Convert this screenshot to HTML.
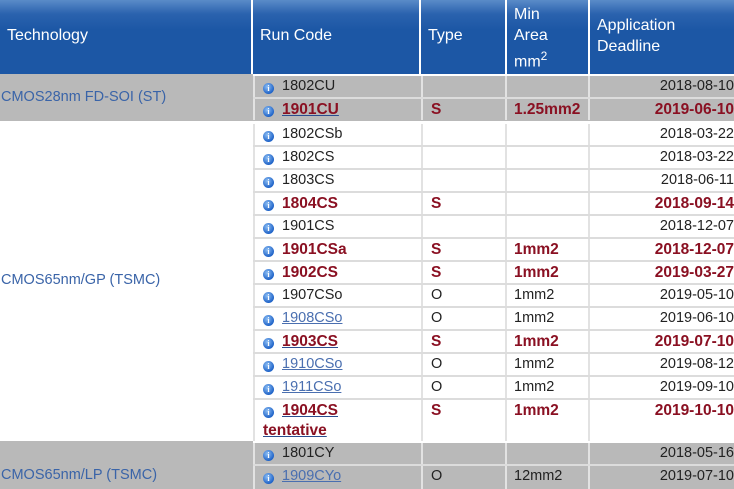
<!DOCTYPE html>
<html><head><meta charset="utf-8"><style>
*{margin:0;padding:0;box-sizing:border-box}
body{width:734px;height:489px;overflow:hidden;background:#fff;font-family:"Liberation Sans",Arial,sans-serif;position:relative}
.hdr{position:absolute;top:0;height:74px;background:linear-gradient(#5a8bc8 0px,#2a62ae 14px,#1c57a5 30px,#1c57a5 74px);color:#fff;font-size:16px}
.hdr span{position:absolute;left:7px}
.g{position:absolute;left:0;width:734px;background:#b9b9b9}
.tech{position:absolute;left:1px;color:#3a64a8;font-size:14.5px}
.row{position:absolute;left:253px;width:481px;height:23px;border-top:2px solid #dcdcdc;font-size:14.5px;color:#222}
.c{position:absolute;top:0;height:100%;border-left:2px solid #e2e2e2}
.rc{left:0;width:170px}
.ty{left:168px;width:86px}
.ar{left:252px;width:84px}
.dl{left:335px;width:146px}
.txt{position:absolute;top:2px;white-space:nowrap}
.rc .txt{left:27px}
.ty .txt{left:8px}
.ar .txt{left:7px}
.dl .txt{right:0}
.i{position:absolute;left:8px;top:7px;width:11px;height:11px;border-radius:50%;background:radial-gradient(circle at 40% 35%,#8fc0f5,#1f63c8 70%);color:#fff;font-size:8px;font-weight:bold;text-align:center;line-height:11px;font-family:"Liberation Serif",serif}
.b{color:#8a1022;font-weight:bold;font-size:15.5px}
.b.rcn{text-decoration:underline;text-decoration-color:#2a4d8f}
.lk{color:#4a6fb0;text-decoration:underline}
</style></head><body>
<div class="hdr" style="left:0;width:251px"><span style="top:27px">Technology</span></div>
<div class="hdr" style="left:253px;width:166px"><span style="top:27px">Run Code</span></div>
<div class="hdr" style="left:421px;width:84px"><span style="top:27px">Type</span></div>
<div class="hdr" style="left:507px;width:81px"><span style="top:4px;line-height:21px">Min<br>Area<br>mm<sup style="font-size:12px">2</sup></span></div>
<div class="hdr" style="left:590px;width:144px"><span style="top:15px;line-height:21px">Application<br>Deadline</span></div>

<div class="g" style="top:74px;height:47px"></div>
<div class="g" style="top:441px;height:48px"></div>
<div class="tech" style="top:89px">CMOS28nm FD-SOI (ST)</div>
<div class="tech" style="top:272px">CMOS65nm/GP (TSMC)</div>
<div class="tech" style="top:467px">CMOS65nm/LP (TSMC)</div>

<div class="row" style="top:74px;border-top-color:#fff"><div class="c rc"><div class="i">i</div><div class="txt">1802CU</div></div><div class="c ty"></div><div class="c ar"></div><div class="c dl"><div class="txt">2018-08-10</div></div></div>
<div class="row" style="top:97px"><div class="c rc"><div class="i">i</div><div class="txt b rcn">1901CU</div></div><div class="c ty"><div class="txt b">S</div></div><div class="c ar"><div class="txt b">1.25mm2</div></div><div class="c dl"><div class="txt b">2019-06-10</div></div></div>

<div class="row" style="top:122px;border-top-color:#fff"><div class="c rc"><div class="i">i</div><div class="txt">1802CSb</div></div><div class="c ty"></div><div class="c ar"></div><div class="c dl"><div class="txt">2018-03-22</div></div></div>
<div class="row" style="top:145px"><div class="c rc"><div class="i">i</div><div class="txt">1802CS</div></div><div class="c ty"></div><div class="c ar"></div><div class="c dl"><div class="txt">2018-03-22</div></div></div>
<div class="row" style="top:168px"><div class="c rc"><div class="i">i</div><div class="txt">1803CS</div></div><div class="c ty"></div><div class="c ar"></div><div class="c dl"><div class="txt">2018-06-11</div></div></div>
<div class="row" style="top:191px"><div class="c rc"><div class="i">i</div><div class="txt b">1804CS</div></div><div class="c ty"><div class="txt b">S</div></div><div class="c ar"></div><div class="c dl"><div class="txt b">2018-09-14</div></div></div>
<div class="row" style="top:214px"><div class="c rc"><div class="i">i</div><div class="txt">1901CS</div></div><div class="c ty"></div><div class="c ar"></div><div class="c dl"><div class="txt">2018-12-07</div></div></div>
<div class="row" style="top:237px"><div class="c rc"><div class="i">i</div><div class="txt b">1901CSa</div></div><div class="c ty"><div class="txt b">S</div></div><div class="c ar"><div class="txt b">1mm2</div></div><div class="c dl"><div class="txt b">2018-12-07</div></div></div>
<div class="row" style="top:260px"><div class="c rc"><div class="i">i</div><div class="txt b">1902CS</div></div><div class="c ty"><div class="txt b">S</div></div><div class="c ar"><div class="txt b">1mm2</div></div><div class="c dl"><div class="txt b">2019-03-27</div></div></div>
<div class="row" style="top:283px"><div class="c rc"><div class="i">i</div><div class="txt">1907CSo</div></div><div class="c ty"><div class="txt">O</div></div><div class="c ar"><div class="txt">1mm2</div></div><div class="c dl"><div class="txt">2019-05-10</div></div></div>
<div class="row" style="top:306px"><div class="c rc"><div class="i">i</div><div class="txt lk">1908CSo</div></div><div class="c ty"><div class="txt">O</div></div><div class="c ar"><div class="txt">1mm2</div></div><div class="c dl"><div class="txt">2019-06-10</div></div></div>
<div class="row" style="top:329px"><div class="c rc"><div class="i">i</div><div class="txt b rcn">1903CS</div></div><div class="c ty"><div class="txt b">S</div></div><div class="c ar"><div class="txt b">1mm2</div></div><div class="c dl"><div class="txt b">2019-07-10</div></div></div>
<div class="row" style="top:352px"><div class="c rc"><div class="i">i</div><div class="txt lk">1910CSo</div></div><div class="c ty"><div class="txt">O</div></div><div class="c ar"><div class="txt">1mm2</div></div><div class="c dl"><div class="txt">2019-08-12</div></div></div>
<div class="row" style="top:375px"><div class="c rc"><div class="i">i</div><div class="txt lk">1911CSo</div></div><div class="c ty"><div class="txt">O</div></div><div class="c ar"><div class="txt">1mm2</div></div><div class="c dl"><div class="txt">2019-09-10</div></div></div>
<div class="row" style="top:398px;height:43px"><div class="c rc"><div class="i">i</div><div class="txt b rcn">1904CS</div><div class="txt b rcn" style="left:8px;top:22px">tentative</div></div><div class="c ty"><div class="txt b">S</div></div><div class="c ar"><div class="txt b">1mm2</div></div><div class="c dl"><div class="txt b">2019-10-10</div></div></div>

<div class="row" style="top:441px;border-top-color:#fff"><div class="c rc"><div class="i">i</div><div class="txt">1801CY</div></div><div class="c ty"></div><div class="c ar"></div><div class="c dl"><div class="txt">2018-05-16</div></div></div>
<div class="row" style="top:464px;height:25px"><div class="c rc"><div class="i">i</div><div class="txt lk">1909CYo</div></div><div class="c ty"><div class="txt">O</div></div><div class="c ar"><div class="txt">12mm2</div></div><div class="c dl"><div class="txt">2019-07-10</div></div></div>
</body></html>
